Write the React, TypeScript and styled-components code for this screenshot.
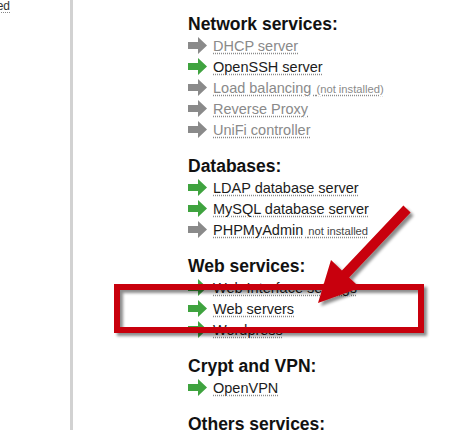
import * as React from 'react';
import styled, { createGlobalStyle } from 'styled-components';

interface Service {
  name: string;
  installed: boolean;
  note?: string;
  noteDark?: boolean;
}

interface Section {
  title: string;
  items: Service[];
}

const sections: Section[] = [
  {
    title: 'Network services:',
    items: [
      { name: 'DHCP server', installed: false },
      { name: 'OpenSSH server', installed: true },
      { name: 'Load balancing', installed: false, note: '(not installed)' },
      { name: 'Reverse Proxy', installed: false },
      { name: 'UniFi controller', installed: false },
    ],
  },
  {
    title: 'Databases:',
    items: [
      { name: 'LDAP database server', installed: true },
      { name: 'MySQL database server', installed: true },
      { name: 'PHPMyAdmin', installed: false, note: 'not installed', noteDark: true },
    ],
  },
  {
    title: 'Web services:',
    items: [
      { name: 'Web Interface settings', installed: true },
      { name: 'Web servers', installed: true },
      { name: 'Wordpress', installed: true },
    ],
  },
  {
    title: 'Crypt and VPN:',
    items: [{ name: 'OpenVPN', installed: true }],
  },
  {
    title: 'Others services:',
    items: [],
  },
];

const GlobalStyle = createGlobalStyle`
  html, body {
    margin: 0;
    padding: 0;
    background: #fff;
    overflow: hidden;
  }
  body {
    font-family: Arial, "Liberation Sans", sans-serif;
  }
`;

const Page = styled.div`
  display: flex;
  min-height: 100vh;
  height: 430px;
  position: relative;
`;

const Sidebar = styled.aside`
  width: 70px;
  flex-shrink: 0;
  border-right: 3px solid #d2d2d2;
`;

const SideNote = styled.div`
  display: flex;
  justify-content: flex-end;
  width: 10px;
  white-space: nowrap;
  font-size: 12px;
  line-height: 12px;
  color: #333;

  span {
    border-bottom: 1px dotted #888;
  }
`;

const Main = styled.main`
  flex: 1;
  padding: 14px 0 0 115px;
`;

const Block = styled.section`
  margin-bottom: 16px;
`;

const Heading = styled.h2`
  margin: 0;
  font-size: 17.5px;
  line-height: 21px;
  font-weight: bold;
  color: #111;
`;

const Row = styled.div`
  display: flex;
  align-items: center;
  gap: 6px;
  height: 21px;
  font-size: 14.5px;
  white-space: nowrap;
`;

const Link = styled.span<{ $installed: boolean }>`
  color: ${(p) => (p.$installed ? '#1c1c1c' : '#8a8a8a')};
  text-decoration: underline dotted #8a8a8a;
  text-underline-offset: 2px;
`;

const Note = styled.span<{ $dark?: boolean }>`
  font-size: 11.2px;
  margin-left: 2px;
  color: ${(p) => (p.$dark ? '#444' : '#8a8a8a')};
`;

const Overlay = styled.svg`
  position: absolute;
  left: 0;
  top: 0;
  width: 474px;
  height: 430px;
  pointer-events: none;
`;

function Arrow({ on }: { on: boolean }) {
  return (
    <svg width="19" height="17" viewBox="0 0 19 17">
      <polygon
        points="0,5 10,5 10,0 19,8.5 10,17 10,12 0,12"
        fill={on ? '#3fa33f' : '#8a8a8a'}
      />
    </svg>
  );
}

export default function App() {
  return (
    <>
      <GlobalStyle />
      <Page>
        <Sidebar>
          <SideNote>
            <span>installed</span>
          </SideNote>
        </Sidebar>
        <Main>
          {sections.map((s, i) => (
            <Block key={'sec' + i}>
              <Heading>{s.title}</Heading>
              {s.items.map((it, j) => (
                <Row key={'it' + j}>
                  <Arrow on={it.installed} />
                  <Link $installed={it.installed || !!it.noteDark}>
                    {it.name}
                    {it.note && <Note $dark={it.noteDark}> {it.note}</Note>}
                  </Link>
                </Row>
              ))}
            </Block>
          ))}
        </Main>

        {/* red annotation drawn over the page */}
        <Overlay viewBox="0 0 474 430">
          <defs>
            <filter id="shade" x="-10%" y="-10%" width="130%" height="140%">
              <feDropShadow dx="3" dy="3" stdDeviation="1.6" floodColor="#000" floodOpacity="0.45" />
            </filter>
          </defs>
          <g filter="url(#shade)">
            <rect x="117" y="287" width="304" height="43" fill="none" stroke="#c8000a" strokeWidth="6" />
            <polygon
              points="403.4,205.6 410.6,212.4 349.1,277.4 360,287.8 318,303 331,260 341.9,270.6"
              fill="#c8000a"
            />
          </g>
        </Overlay>
      </Page>
    </>
  );
}
